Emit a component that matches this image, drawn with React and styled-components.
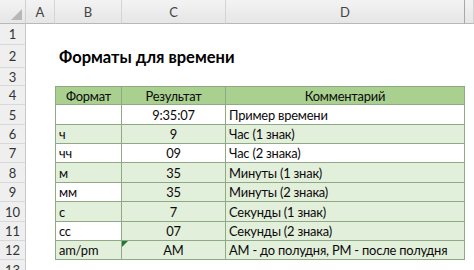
import React from "react";
import styled, { createGlobalStyle } from "styled-components";

const Global = createGlobalStyle`
  html, body { margin: 0; padding: 0; background: #fff; overflow: hidden; }
  body { font-family: Lato, "Open Sans", sans-serif; }
`;

const Sheet = styled.div`
  display: grid;
  grid-template-columns: 26px 29px 67px 104px 239px 9px;
  grid-template-rows: 24px 21px 23px 18px 19px 20px 19px 19px 20px 19px 20px 19px 19px 20px;
  width: 474px;
  height: 270px;
  overflow: hidden;
  color: #111;
`;

const Corner = styled.div`
  position: relative;
  background: linear-gradient(#f3f3f3, #e6e6e6);
  border-right: 1px solid #d0d0d0;
  border-bottom: 1px solid #b8b8b8;
  box-sizing: border-box;
  &::after {
    content: "";
    position: absolute;
    right: 3px;
    bottom: 3px;
    width: 0;
    height: 0;
    border-left: 11px solid transparent;
    border-bottom: 11px solid #b7b7b7;
  }
`;

const ColHead = styled.div`
  background: linear-gradient(#f3f3f3, #e6e6e6);
  border-right: 1px solid ${(p) => (p.$edge ? "#a8a8a8" : "#d4d4d4")};
  border-bottom: 1px solid #b8b8b8;
  box-sizing: border-box;
  display: flex;
  align-items: center;
  justify-content: center;
  font-size: 13px;
  color: #444;
  padding-top: 1px;
`;

const RowHead = styled.div`
  background: #efefef;
  border-right: 1px solid #c8c8c8;
  border-bottom: 1px solid #d8d8d8;
  box-sizing: border-box;
  display: flex;
  align-items: center;
  justify-content: center;
  font-size: 13px;
  color: #333;
`;

const Blank = styled.div`
  background: #fff;
`;

const Title = styled.div`
  grid-column: 3 / 6;
  display: flex;
  align-items: center;
  padding-left: 4px;
  font-size: 16.5px;
  font-weight: 700;
  color: #000;
  white-space: nowrap;
  padding-top: 1px;
`;

const Cell = styled.div`
  position: relative;
  box-sizing: border-box;
  background: ${(p) => (p.$head ? "#a9d08e" : p.$green ? "#e2efda" : "#ffffff")};
  border-right: 1px solid #8fa886;
  border-bottom: 1px solid #8fa886;
  border-left: ${(p) => (p.$first ? "1px solid #8fa886" : "none")};
  border-top: ${(p) => (p.$top ? "1px solid #8fa886" : "none")};
  display: flex;
  align-items: center;
  justify-content: ${(p) => (p.$align === "center" ? "center" : "flex-start")};
  padding: 0 3px;
  font-size: 12.9px;
  letter-spacing: -0.2px;
  color: #0a0a0a;
  white-space: nowrap;
  overflow: visible;
`;

const ErrorMark = styled.span`
  position: absolute;
  left: 0;
  top: 0;
  width: 0;
  height: 0;
  border-top: 6px solid #1f7a3a;
  border-right: 6px solid transparent;
`;

const rows = [
  { b: "", c: "9:35:07", d: "Пример времени", g: [false, false, false] },
  { b: "ч", c: "9", d: "Час (1 знак)", g: [true, true, true] },
  { b: "чч", c: "09", d: "Час (2 знака)", g: [false, false, false] },
  { b: "м", c: "35", d: "Минуты (1 знак)", g: [true, true, true] },
  { b: "мм", c: "35", d: "Минуты (2 знака)", g: [false, true, true] },
  { b: "с", c: "7", d: "Секунды (1 знак)", g: [true, true, true] },
  { b: "сс", c: "07", d: "Секунды (2 знака)", g: [false, true, true] },
  { b: "am/pm", c: "AM", d: "AM - до полудня, PM - после полудня", g: [true, true, true], mark: true },
];

export default function App() {
  return (
    <>
      <Global />
      <Sheet>
        <Corner />
        <ColHead>A</ColHead>
        <ColHead>B</ColHead>
        <ColHead>C</ColHead>
        <ColHead $edge>D</ColHead>
        <ColHead />

        <RowHead>1</RowHead>
        <Blank /><Blank /><Blank /><Blank /><Blank />

        <RowHead>2</RowHead>
        <Blank />
        <Title>Форматы для времени</Title>
        <Blank />

        <RowHead>3</RowHead>
        <Blank /><Blank /><Blank /><Blank /><Blank />

        <RowHead>4</RowHead>
        <Blank />
        <Cell $head $first $top $align="center">Формат</Cell>
        <Cell $head $top $align="center">Результат</Cell>
        <Cell $head $top $align="center">Комментарий</Cell>
        <Blank />

        {rows.map((r, i) => (
          <React.Fragment key={i}>
            <RowHead>{i + 5}</RowHead>
            <Blank />
            <Cell $first $green={r.g[0]}>{r.b}</Cell>
            <Cell $green={r.g[1]} $align="center">
              {r.mark && <ErrorMark />}
              {r.c}
            </Cell>
            <Cell $green={r.g[2]}>{r.d}</Cell>
            <Blank />
          </React.Fragment>
        ))}

        <RowHead>13</RowHead>
        <Blank /><Blank /><Blank /><Blank /><Blank />
      </Sheet>
    </>
  );
}
